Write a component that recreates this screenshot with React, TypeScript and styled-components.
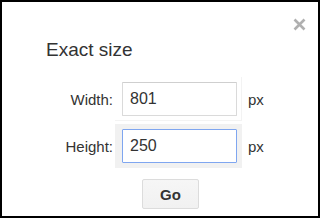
import React from 'react';
import styled, { createGlobalStyle } from 'styled-components';

const Global = createGlobalStyle`
  html, body { margin: 0; padding: 0; background: #000; }
  body { font-family: Arial, "Liberation Sans", Helvetica, sans-serif; }
`;

const Frame = styled.div`
  position: relative;
  box-sizing: border-box;
  width: 320px;
  height: 218px;
  border: 2px solid #000;
  background: #fff;
  padding: 37px 0 0 0;
`;

const Close = styled.button`
  position: absolute;
  top: 14px;
  right: 11px;
  width: 16px;
  height: 16px;
  padding: 0;
  border: 0;
  background: none;
  display: flex;
  align-items: center;
  justify-content: center;
  cursor: pointer;
`;

const Title = styled.h2`
  margin: 0 0 16px 44px;
  font-size: 19px;
  line-height: 22px;
  font-weight: normal;
  color: #333;
`;

const Form = styled.div`
  display: grid;
  grid-template-columns: 53px 127px auto;
  column-gap: 2px;
  row-gap: 3px;
  margin-left: 58px;
  align-items: center;
`;

const Label = styled.label`
  font-size: 15px;
  color: #333;
  text-align: right;
  white-space: nowrap;
`;

const Cell = styled.div<{ $active?: boolean }>`
  box-sizing: border-box;
  height: 44px;
  padding: 5px 5px 5px 7px;
  background: ${p => (p.$active ? '#f1f1f1' : '#fff')};
  border-right: 1px solid ${p => (p.$active ? '#f1f1f1' : '#f3f3f3')};
  border-bottom: 1px solid ${p => (p.$active ? '#f1f1f1' : '#f3f3f3')};
`;

const Input = styled.input<{ $focus?: boolean }>`
  box-sizing: border-box;
  display: block;
  width: 115px;
  height: 34px;
  margin: 0;
  padding: 0 0 0 7px;
  font-family: Arial, "Liberation Sans", sans-serif;
  font-size: 16px;
  color: #333;
  background: #fff;
  border: 1px solid ${p => (p.$focus ? '#7fa6f0' : '#dadada')};
  border-top-color: ${p => (p.$focus ? '#7fa6f0' : '#cfcfcf')};
  border-radius: 1px;
  outline: none;
`;

const Unit = styled.span`
  font-size: 15px;
  color: #333;
  margin-left: 4px;
`;

const Footer = styled.div`
  display: flex;
  padding: 11px 0 0 140px;
`;

const GoButton = styled.button`
  box-sizing: border-box;
  width: 57px;
  height: 30px;
  border: 1px solid #dcdcdc;
  border-radius: 2px;
  background: linear-gradient(#f6f6f6, #f1f1f1);
  font-family: Arial, "Liberation Sans", sans-serif;
  font-size: 15px;
  font-weight: bold;
  color: #333;
  cursor: pointer;
`;

const App: React.FC = () => {
  return (
    <Frame>
      <Global />
      <Close aria-label="Close">
        <svg width="13" height="13" viewBox="0 0 13 13">
          <path d="M1.5 1.5 L11.5 11.5 M11.5 1.5 L1.5 11.5" stroke="#b0b0b0" strokeWidth="2.6" />
        </svg>
      </Close>
      <Title>Exact size</Title>
      <Form>
        <Label>Width:</Label>
        <Cell>
          <Input defaultValue="801" />
        </Cell>
        <Unit>px</Unit>
        <Label>Height:</Label>
        <Cell $active>
          <Input $focus defaultValue="250" />
        </Cell>
        <Unit>px</Unit>
      </Form>
      <Footer>
        <GoButton>Go</GoButton>
      </Footer>
    </Frame>
  );
};

export default App;
